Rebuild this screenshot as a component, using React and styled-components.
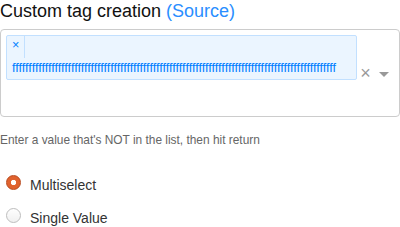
import React from "react";
import styled, { createGlobalStyle } from "styled-components";

const GlobalStyle = createGlobalStyle`
  html, body {
    margin: 0;
    padding: 0;
    background: #fff;
  }
  body {
    font-family: "Liberation Sans", Arial, sans-serif;
    font-size: 14px;
    color: #333;
  }
`;

const Section = styled.div`
  width: 400px;
`;

const Heading = styled.h3`
  margin: 0;
  font-size: 18px;
  font-weight: normal;
  line-height: 22px;
  color: #111;
`;

const SourceLink = styled.a`
  color: #2a8eff;
  text-decoration: none;
`;

const Control = styled.div`
  margin-top: 7px;
  display: flex;
  align-items: center;
  border: 1px solid #ccc;
  border-radius: 4px;
  background: #fff;
`;

const ValueWrapper = styled.div`
  flex: 1;
  display: flex;
  flex-wrap: wrap;
  align-items: flex-start;
  min-width: 0;
`;

const Tag = styled.div`
  flex: 1;
  margin: 5px 0 0 5px;
  font-size: 12.6px;
  line-height: 17.6px;
  color: #007eff;
  background: #ebf5ff;
  border: 1px solid #c2e0ff;
  border-radius: 2px;
`;

const TagIcon = styled.span`
  display: inline-block;
  padding: 1px 5px 3px;
  border-right: 1px solid #c2e0ff;
  cursor: pointer;
`;

const TagLabel = styled.span`
  display: block;
  padding: 2px 5px;
  white-space: nowrap;
  overflow: hidden;
`;

const InputRow = styled.div`
  width: 100%;
  height: 36px;
`;

const ClearZone = styled.span`
  width: 17px;
  color: #999;
  font-size: 18px;
  line-height: 1;
  text-align: center;
  cursor: pointer;
`;

const ArrowZone = styled.span`
  box-sizing: border-box;
  width: 25px;
  padding-right: 5px;
  display: flex;
  justify-content: center;
`;

const Arrow = styled.span`
  border-color: #999 transparent transparent;
  border-style: solid;
  border-width: 5px 5px 2.5px;
  display: inline-block;
  height: 0;
  width: 0;
  margin-top: 4px;
`;

const Hint = styled.div`
  margin: 15px 0;
  font-size: 11.9px;
  line-height: 16px;
  color: #666;
`;

const RadioList = styled.div`
  margin-top: 28px;
  display: flex;
  flex-direction: column;
  gap: 15px;
`;

const RadioRow = styled.label`
  display: flex;
  align-items: center;
  height: 18px;
  font-size: 14px;
  color: #333;
  cursor: pointer;
`;

const RadioDot = styled.span`
  box-sizing: border-box;
  width: 15px;
  height: 15px;
  margin: 0 9px 0 6px;
  position: relative;
  top: -3px;
  border-radius: 50%;
  border: 1px solid ${({ checked }) => (checked ? "#b8481c" : "#bdbdbd")};
  background: ${({ checked }) =>
    checked
      ? "radial-gradient(circle, #fff 0 2.3px, #e0622e 3px)"
      : "linear-gradient(#fefefe, #f0f0f0)"};
`;

export default function App() {
  const longValue = "f".repeat(99);
  return (
    <Section>
      <GlobalStyle />
      <Heading>
        Custom tag creation <SourceLink href="#">(Source)</SourceLink>
      </Heading>
      <Control>
        <ValueWrapper>
          <Tag>
            <TagIcon>×</TagIcon>
            <TagLabel>{longValue}</TagLabel>
          </Tag>
          <InputRow />
        </ValueWrapper>
        <ClearZone>×</ClearZone>
        <ArrowZone>
          <Arrow />
        </ArrowZone>
      </Control>
      <Hint>Enter a value that's NOT in the list, then hit return</Hint>
      <RadioList>
        <RadioRow>
          <RadioDot checked />
          Multiselect
        </RadioRow>
        <RadioRow>
          <RadioDot />
          Single Value
        </RadioRow>
      </RadioList>
    </Section>
  );
}
